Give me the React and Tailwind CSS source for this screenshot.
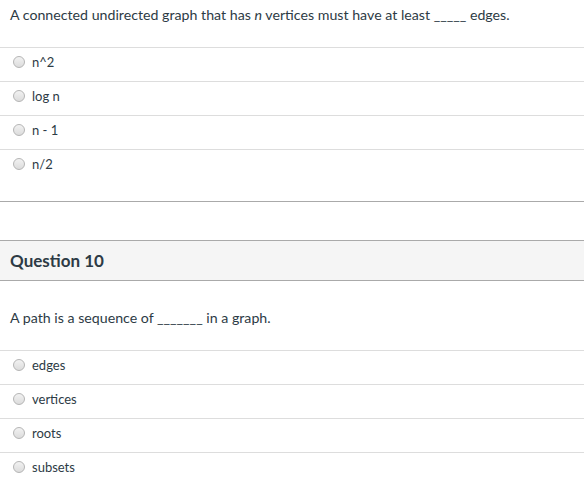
import React from "react";

function Radio() {
  return (
    <span className="inline-block w-[12px] h-[12px] rounded-full border border-[#b5b5b5] bg-gradient-to-b from-[#f2f2f2] to-[#dcdcdc] shrink-0" />
  );
}

function Option({ label }) {
  return (
    <div className="h-[34px] border-t border-[#dddddd]">
      <div className="h-[28px] flex items-center pl-[13px] gap-[7px]">
        <Radio />
        <span className="text-[13px] leading-[16px] text-[#2d3b45]">{label}</span>
      </div>
    </div>
  );
}

export default function App() {
  return (
    <div className="w-[584px] h-[502px] bg-white overflow-hidden text-[#2d3b45]" style={{ fontFamily: "Lato, 'Noto Sans', sans-serif" }}>
      <div className="border-b border-[#aaaaaa]">
        <div className="h-[47px] pl-[10px] pt-[5px] text-[14.2px] leading-[20px]">
          A connected undirected graph that has <i>n</i> vertices must have at least _____ edges.
        </div>
        <Option label="n^2" />
        <Option label="log n" />
        <Option label="n - 1" />
        <Option label="n/2" />
        <div className="h-[18px]" />
      </div>
      <div className="h-[38px]" />
      <div className="h-[41px] border-t border-b border-[#aaaaaa] bg-[#f5f5f5] flex items-center pl-[10px]">
        <span className="text-[17px] font-bold leading-[20px]">Question 10</span>
      </div>
      <div className="h-[69px] pl-[10px] pt-[27px] text-[14.2px] leading-[20px]">
        A path is a sequence of _______ in a graph.
      </div>
      <Option label="edges" />
      <Option label="vertices" />
      <Option label="roots" />
      <Option label="subsets" />
    </div>
  );
}
